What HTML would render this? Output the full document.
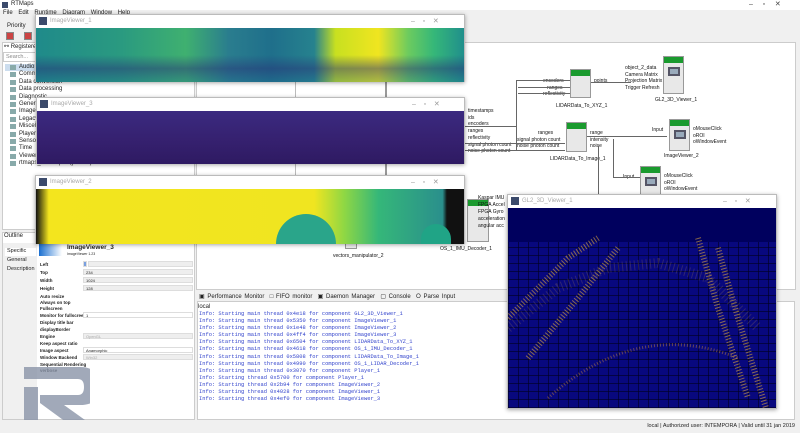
<!DOCTYPE html>
<html><head><meta charset="utf-8">
<style>
*{margin:0;padding:0;box-sizing:border-box}
body{width:800px;height:433px;overflow:hidden;background:#f0f0f0;font-family:"Liberation Sans",sans-serif;font-size:6px;color:#222;position:relative}
.a{position:absolute}
.win{position:absolute;background:#fff;border:1px solid #bbb;box-shadow:0 1px 4px rgba(0,0,0,.35)}
.tb{height:13px;background:#fff;font-size:6px;color:#aaa;padding:3px 0 0 14px;position:relative}
.tb i{position:absolute;left:3px;top:2px;width:8px;height:8px;background:#3b4a6b}
.tb b{position:absolute;top:2px;font-weight:normal;color:#999;font-size:7px}
.blk{position:absolute;background:#e8e8e8;border:1px solid #999}
.blk:before{content:"";position:absolute;left:0;top:0;right:0;height:6px;background:#1a9a2e}
.mon{position:absolute;left:4px;top:10px;width:12px;height:9px;border:2px solid #556;background:#9ab}
.lbl{position:absolute;font-size:5px;color:#111;white-space:nowrap}
.ln{position:absolute;background:#666}
.con{position:absolute;left:199px;font-family:"Liberation Mono",monospace;font-size:5.4px;color:#3344cc;white-space:pre}
.tree div{height:7.4px;font-size:6px;padding-left:14px;position:relative}
.tree div:before{content:"";position:absolute;left:5px;top:1px;width:6px;height:5px;background:#8aa;}
.pr{position:absolute;left:40px;font-size:4.5px;font-weight:bold;color:#222}
.pv{position:absolute;left:83px;width:110px;height:6px;background:#eee;border:1px solid #ddd;font-size:4px;padding-left:2px}
</style></head><body>
<div class="a" style="left:0;top:0;width:800px;height:10px;background:#fff"></div>
<div class="a" style="left:2px;top:2px;width:6px;height:6px;background:#3b4a6b"></div>
<div class="a" style="left:11px;top:1px;font-size:6px">RTMaps</div>
<div class="a" style="left:749px;top:0;font-size:7px;color:#444">–&nbsp;&nbsp;&nbsp;&nbsp;&nbsp;▫&nbsp;&nbsp;&nbsp;&nbsp;&nbsp;✕</div>
<div class="a" style="left:3px;top:10px;font-size:6px;word-spacing:4px">File Edit Runtime Diagram Window Help</div>
<div class="a" style="left:0;top:18px;width:800px;height:24px;background:#f0f0f0"></div>
<div class="a" style="left:7px;top:23px;font-size:6px">Priority</div>
<div class="a" style="left:6px;top:32px;width:8px;height:8px;background:#c44;border:1px solid #888"></div>
<div class="a" style="left:24px;top:32px;width:8px;height:8px;background:#c44;border:1px solid #888"></div>
<div class="a" style="left:2px;top:42px;width:193px;height:188px;background:#fff;border:1px solid #ccc"></div>
<div class="a" style="left:4px;top:43px;font-size:6px">⚯ Registered</div>
<div class="a" style="left:3px;top:52px;width:190px;height:10px;border:1px solid #ccc;font-size:5.5px;color:#888;padding:1px 2px">Search...</div>
<div class="a tree" style="left:5px;top:64px">
<div style="background:#cde">Audio</div><div>Communication</div><div>Data conversion</div><div>Data processing</div><div>Diagnostic</div><div>Generic</div><div>Image</div><div>Legacy</div><div>Miscellaneous</div><div>Players</div><div>Sensors</div><div>Time</div><div>Viewers</div><div>rtmaps_ouster.pck (private)</div></div>
<div class="a" style="left:196px;top:42px;width:600px;height:248px;background:#fff;border:1px solid #ccc"></div>
<div class="a" style="left:385px;top:82px;width:2px;height:93px;background:#999"></div>
<div class="a" style="left:295px;top:82px;width:1px;height:93px;background:#bbb"></div>
<div class="blk" style="left:570px;top:69px;width:21px;height:29px"></div>
<div class="lbl" style="left:556px;top:103px">LIDARData_To_XYZ_1</div>
<div class="blk" style="left:663px;top:56px;width:21px;height:38px"><div class="mon"></div></div>
<div class="lbl" style="left:655px;top:97px">GL2_3D_Viewer_1</div>
<div class="blk" style="left:669px;top:119px;width:21px;height:32px"><div class="mon"></div></div>
<div class="lbl" style="left:664px;top:153px">ImageViewer_2</div>
<div class="blk" style="left:566px;top:122px;width:21px;height:30px"></div>
<div class="lbl" style="left:550px;top:156px">LIDARData_To_Image_1</div>
<div class="blk" style="left:640px;top:166px;width:21px;height:30px"><div class="mon"></div></div>
<div class="blk" style="left:467px;top:199px;width:22px;height:43px"></div>
<div class="blk" style="left:345px;top:225px;width:12px;height:24px;background:#eee"></div>
<div class="lbl" style="left:333px;top:253px">vectors_manipulator_2</div>
<div class="lbl" style="left:440px;top:246px">OS_1_IMU_Decoder_1</div>
<div class="lbl" style="left:478px;top:195px;line-height:7px">Kaspar IMU<br>FPGA Accel<br>FPGA Gyro<br>acceleration<br>angular acc</div>
<div class="lbl" style="left:468px;top:108px;line-height:6.7px">timestamps<br>ids<br>encoders<br>ranges<br>reflectivity<br>signal photon count<br>noise photon count</div>
<div class="lbl" style="left:543px;top:78px;line-height:6.7px">encoders<br>&nbsp;&nbsp;&nbsp;ranges<br>reflectivity</div>
<div class="lbl" style="left:594px;top:78px">points</div>
<div class="lbl" style="left:625px;top:65px;line-height:6.7px">object_2_data<br>Camera Matrix<br>Projection Matrix<br>Trigger Refresh</div>
<div class="lbl" style="left:517px;top:130px;line-height:6.7px">&nbsp;&nbsp;&nbsp;&nbsp;&nbsp;&nbsp;&nbsp;&nbsp;&nbsp;&nbsp;&nbsp;&nbsp;&nbsp;&nbsp;&nbsp;ranges<br>signal photon count<br>noise photon count</div>
<div class="lbl" style="left:590px;top:130px;line-height:6.7px">range<br>intensity<br>noise</div>
<div class="lbl" style="left:652px;top:127px">Input</div>
<div class="lbl" style="left:693px;top:126px;line-height:6.7px">oMouseClick<br>oROI<br>oWindowEvent</div>
<div class="lbl" style="left:623px;top:174px">Input</div>
<div class="lbl" style="left:664px;top:173px;line-height:6.7px">oMouseClick<br>oROI<br>oWindowEvent</div>
<div class="ln" style="left:516px;top:80px;width:1px;height:70px"></div>
<div class="ln" style="left:516px;top:80px;width:54px;height:1px"></div>
<div class="ln" style="left:518px;top:87px;width:52px;height:1px"></div>
<div class="ln" style="left:518px;top:93px;width:52px;height:1px"></div>
<div class="ln" style="left:591px;top:82px;width:40px;height:1px"></div>
<div class="ln" style="left:587px;top:136px;width:80px;height:1px"></div>
<div class="ln" style="left:613px;top:139px;width:1px;height:38px"></div>
<div class="ln" style="left:613px;top:177px;width:27px;height:1px"></div>
<div class="ln" style="left:598px;top:146px;width:1px;height:48px"></div>
<div class="ln" style="left:465px;top:126px;width:52px;height:1px"></div>
<div class="ln" style="left:465px;top:143px;width:100px;height:1px"></div>
<div class="ln" style="left:465px;top:150px;width:100px;height:1px"></div>
<div class="a" style="left:2px;top:232px;width:193px;height:188px;background:#fff;border:1px solid #ccc"></div>
<div class="a" style="left:4px;top:233px;font-size:6px">Outline</div>
<div class="a" style="left:3px;top:243px;width:34px;height:176px;background:#f0f0f0"></div>
<div class="a" style="left:5px;top:248px;width:31px;height:8px;background:#fff;font-size:5.5px;padding-left:2px">Specific</div>
<div class="a" style="left:5px;top:257px;font-size:5.5px;padding-left:2px">General</div>
<div class="a" style="left:5px;top:266px;font-size:5.5px;padding-left:2px">Description</div>
<div class="a" style="left:39px;top:244px;width:23px;height:12px;background:linear-gradient(90deg,#1a6fd0,#fff)"></div>
<div class="a" style="left:67px;top:244px;font-size:6.5px;font-weight:bold">ImageViewer_3</div>
<div class="a" style="left:67px;top:252px;font-size:3.5px">ImageViewer 1.23</div>
<div class="pr" style="top:262px">Left</div><div class="pv" style="top:261px;background:#7aa0e0;width:4px"></div><div class="pv" style="top:261px;left:88px;width:105px"></div>
<div class="pr" style="top:270px">Top</div><div class="pv" style="top:269px">234</div>
<div class="pr" style="top:278px">Width</div><div class="pv" style="top:277px">1024</div>
<div class="pr" style="top:286px">Height</div><div class="pv" style="top:285px">128</div>
<div class="pr" style="top:294px">Auto resize</div>
<div class="pr" style="top:300px">Always on top</div>
<div class="pr" style="top:306px">Fullscreen</div>
<div class="pr" style="top:313px">Monitor for fullscreen</div><div class="pv" style="top:312px;background:#fff">1</div>
<div class="pr" style="top:320px">Display title bar</div>
<div class="pr" style="top:327px">displayBorder</div>
<div class="pr" style="top:334px">Engine</div><div class="pv" style="top:333px;color:#aaa">OpenGL</div>
<div class="pr" style="top:341px">Keep aspect ratio</div>
<div class="pr" style="top:348px">Image aspect</div><div class="pv" style="top:347px;background:#fff">Anamorphic</div>
<div class="pr" style="top:355px">Window Backend</div><div class="pv" style="top:354px;color:#aaa">Win32</div>
<div class="pr" style="top:362px">Sequential Rendering</div>
<div class="pr" style="top:368px">verbose</div>
<svg class="a" style="left:20px;top:365px" width="70" height="55"><path d="M4 2 H60 Q80 2 80 22 Q80 40 60 40 H44 L72 60 H50 L20 38 V30 H58 Q64 30 64 22 Q64 14 58 14 H4 Z" fill="#8a93a8" opacity=".8"/><rect x="4" y="22" width="14" height="40" fill="#8a93a8" opacity=".8"/></svg>
<div class="a" style="left:197px;top:291px;width:598px;height:129px;background:#fff;border:1px solid #ccc"></div>
<div class="a" style="left:197px;top:291px;width:598px;height:11px;background:#f0f0f0;border-bottom:1px solid #ccc"></div>
<div class="a" style="left:199px;top:293px;font-size:6px;word-spacing:1px">▣ Performance Monitor &nbsp;□ FIFO monitor &nbsp;▣ Daemon Manager &nbsp;▢ Console &nbsp;⭘ Parse Input</div>
<div class="a" style="left:198px;top:304px;font-size:6px">local</div>
<div class="con" style="top:311px;line-height:7.1px">Info: Starting main thread 0x4e18 for component GL2_3D_Viewer_1
Info: Starting main thread 0x5350 for component ImageViewer_1
Info: Starting main thread 0x1e48 for component ImageViewer_2
Info: Starting main thread 0x4ff4 for component ImageViewer_3
Info: Starting main thread 0x6504 for component LIDARData_To_XYZ_1
Info: Starting main thread 0x4618 for component OS_1_IMU_Decoder_1
Info: Starting main thread 0x5808 for component LIDARData_To_Image_1
Info: Starting main thread 0x4990 for component OS_1_LIDAR_Decoder_1
Info: Starting main thread 0x3070 for component Player_1
Info: Starting thread 0x5700 for component Player_1
Info: Starting thread 0x2b94 for component ImageViewer_2
Info: Starting thread 0x4028 for component ImageViewer_1
Info: Starting thread 0x4ef0 for component ImageViewer_3</div>
<div class="a" style="left:400px;top:423px;width:395px;text-align:right;font-size:5.5px">local | Authorized user: INTEMPORA | Valid until 31 jan 2019</div>
<div class="win" style="left:35px;top:14px;width:430px;height:68px"><div class="tb"><i></i>ImageViewer_1<b style="left:375px">–&nbsp;&nbsp;&nbsp;&nbsp;▫&nbsp;&nbsp;&nbsp;&nbsp;✕</b></div>
<div style="height:54px;background:linear-gradient(90deg,#1f8a8a 0%,#2a9a80 20%,#3fb070 35%,#2a7d8e 45%,#1f6f8b 55%,#26828e 65%,#c8e020 70%,#f0e520 80%,#6ccb5f 87%,#35b779 93%,#208f8c 100%)"><div style="height:100%;background:linear-gradient(180deg,rgba(0,0,0,0) 50%,rgba(40,50,120,.5) 75%,rgba(30,100,140,.3))"></div></div></div>
<div class="win" style="left:36px;top:97px;width:429px;height:67px"><div class="tb"><i></i>ImageViewer_3<b style="left:375px">–&nbsp;&nbsp;&nbsp;&nbsp;▫&nbsp;&nbsp;&nbsp;&nbsp;✕</b></div>
<div style="height:53px;background:linear-gradient(180deg,#3b2a80,#35206e 60%,#2e1a62)"></div></div>
<div class="win" style="left:35px;top:175px;width:430px;height:69px"><div class="tb"><i></i>ImageViewer_2<b style="left:375px">–&nbsp;&nbsp;&nbsp;&nbsp;▫&nbsp;&nbsp;&nbsp;&nbsp;✕</b></div>
<div style="height:55px;position:relative;background:linear-gradient(90deg,#111 0%,#f3e51e 3%,#f0e520 65%,#8fd744 72%,#35b779 80%,#2a8f8c 95%,#111 96%,#111 100%)">
<div style="position:absolute;left:240px;top:25px;width:60px;height:30px;border-radius:30px 30px 0 0;background:#2aa58a"></div>
<div style="position:absolute;left:385px;top:35px;width:30px;height:20px;border-radius:15px 15px 0 0;background:#20a486"></div></div></div>
<div class="win" style="left:507px;top:194px;width:270px;height:215px"><div class="tb"><i></i>GL2_3D_Viewer_1<b style="left:215px">–&nbsp;&nbsp;&nbsp;&nbsp;▫&nbsp;&nbsp;&nbsp;&nbsp;✕</b></div>
<div style="height:200px;position:relative;background:#08087e;overflow:hidden">
<div style="position:absolute;left:0;top:0;width:100%;height:34px;background:#00005e"></div>
<div style="position:absolute;left:0;top:34px;width:100%;height:166px;background:repeating-linear-gradient(0deg,rgba(0,0,30,.6) 0 1px,transparent 1px 8px),repeating-linear-gradient(90deg,rgba(0,0,30,.6) 0 1px,transparent 1px 10px)"></div>
<svg style="position:absolute;left:0;top:0" width="270" height="200">
<path d="M0 110 L60 50 L90 30 M20 150 L70 90 L110 40 M190 30 L210 100 L240 190 M210 40 L230 110 L258 200" stroke="#e0a840" stroke-width="6" fill="none" opacity=".6" stroke-dasharray="1 2"/>
<path d="M40 190 Q130 110 230 150" stroke="#c08040" stroke-width="3" fill="none" opacity=".5" stroke-dasharray="1 2"/>
<path d="M0 120 L50 80 L100 60 L150 55 L200 70 L250 120" stroke="#8a6a60" stroke-width="10" fill="none" opacity=".3" stroke-dasharray="1 3"/>
</svg></div></div>
</body></html>
